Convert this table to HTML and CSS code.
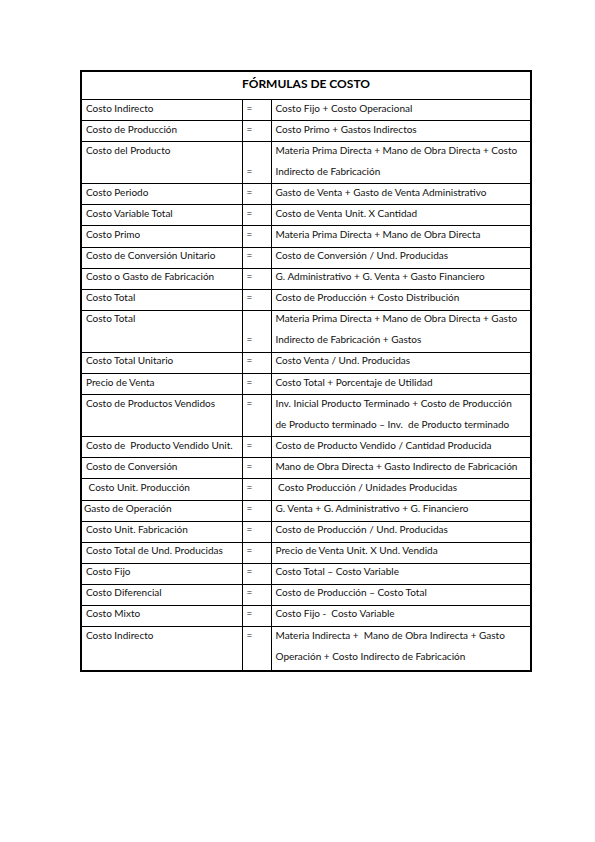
FILE: index.html
```html
<!DOCTYPE html>
<html lang="es">
<head>
<meta charset="utf-8">
<title>Fórmulas de Costo</title>
<link rel="stylesheet" href="styles.css">
</head>
<body>
<div class="page">
<table class="costs">
  <colgroup>
    <col class="c-name">
    <col class="c-eq">
    <col class="c-formula">
  </colgroup>
  <thead>
    <tr><th colspan="3" class="title">FÓRMULAS DE COSTO</th></tr>
  </thead>
  <tbody>
    <tr><td><div class="in">Costo Indirecto</div></td><td><div class="in">=</div></td><td><div class="in">Costo Fijo + Costo Operacional</div></td></tr>
    <tr><td><div class="in">Costo de Producción</div></td><td><div class="in">=</div></td><td><div class="in">Costo Primo + Gastos Indirectos</div></td></tr>
    <tr><td><div class="in">Costo del Producto</div></td><td class="bottom"><div class="in">=</div></td><td><div class="in">Materia Prima Directa + Mano de Obra Directa + Costo<br>Indirecto de Fabricación</div></td></tr>
    <tr><td><div class="in">Costo Periodo</div></td><td><div class="in">=</div></td><td><div class="in">Gasto de Venta + Gasto de Venta Administrativo</div></td></tr>
    <tr><td><div class="in">Costo Variable Total</div></td><td><div class="in">=</div></td><td><div class="in">Costo de Venta Unit. X Cantidad</div></td></tr>
    <tr><td><div class="in">Costo Primo</div></td><td><div class="in">=</div></td><td><div class="in">Materia Prima Directa + Mano de Obra Directa</div></td></tr>
    <tr><td><div class="in">Costo de Conversión Unitario</div></td><td><div class="in">=</div></td><td><div class="in">Costo de Conversión / Und. Producidas</div></td></tr>
    <tr><td><div class="in">Costo o Gasto de Fabricación</div></td><td><div class="in">=</div></td><td><div class="in">G. Administrativo + G. Venta + Gasto Financiero</div></td></tr>
    <tr><td><div class="in">Costo Total</div></td><td><div class="in">=</div></td><td><div class="in">Costo de Producción + Costo Distribución</div></td></tr>
    <tr><td><div class="in">Costo Total</div></td><td class="bottom"><div class="in">=</div></td><td><div class="in">Materia Prima Directa + Mano de Obra Directa + Gasto<br>Indirecto de Fabricación + Gastos</div></td></tr>
    <tr><td><div class="in">Costo Total Unitario</div></td><td><div class="in">=</div></td><td><div class="in">Costo Venta / Und. Producidas</div></td></tr>
    <tr><td><div class="in">Precio de Venta</div></td><td><div class="in">=</div></td><td><div class="in">Costo Total + Porcentaje de Utilidad</div></td></tr>
    <tr><td><div class="in">Costo de Productos Vendidos</div></td><td><div class="in">=</div></td><td><div class="in">Inv. Inicial Producto Terminado + Costo de Producción<br>de Producto terminado – Inv.&nbsp; de Producto terminado</div></td></tr>
    <tr><td><div class="in">Costo de&nbsp; Producto Vendido Unit.</div></td><td><div class="in">=</div></td><td><div class="in">Costo de Producto Vendido / Cantidad Producida</div></td></tr>
    <tr><td><div class="in">Costo de Conversión</div></td><td><div class="in">=</div></td><td><div class="in">Mano de Obra Directa + Gasto Indirecto de Fabricación</div></td></tr>
    <tr><td><div class="in">&nbsp;Costo Unit. Producción</div></td><td><div class="in">=</div></td><td><div class="in">&nbsp;Costo Producción / Unidades Producidas</div></td></tr>
    <tr><td class="tight"><div class="in">Gasto de Operación</div></td><td><div class="in">=</div></td><td><div class="in">G. Venta + G. Administrativo + G. Financiero</div></td></tr>
    <tr><td><div class="in">Costo Unit. Fabricación</div></td><td><div class="in">=</div></td><td><div class="in">Costo de Producción / Und. Producidas</div></td></tr>
    <tr><td><div class="in">Costo Total de Und. Producidas</div></td><td><div class="in">=</div></td><td><div class="in">Precio de Venta Unit. X Und. Vendida</div></td></tr>
    <tr><td><div class="in">Costo Fijo</div></td><td><div class="in">=</div></td><td><div class="in">Costo Total – Costo Variable</div></td></tr>
    <tr><td><div class="in">Costo Diferencial</div></td><td><div class="in">=</div></td><td><div class="in">Costo de Producción – Costo Total</div></td></tr>
    <tr><td><div class="in">Costo Mixto</div></td><td><div class="in">=</div></td><td><div class="in">Costo Fijo -&nbsp; Costo Variable</div></td></tr>
    <tr class="last"><td><div class="in">Costo Indirecto</div></td><td><div class="in">=</div></td><td><div class="in">Materia Indirecta +&nbsp; Mano de Obra Indirecta + Gasto<br>Operación + Costo Indirecto de Fabricación</div></td></tr>
  </tbody>
</table>
</div>
</body>
</html>
```

FILE: styles.css
```css
html, body {
  margin: 0;
  padding: 0;
  background: #ffffff;
}

.page {
  width: 595px;
  height: 842px;
  padding-top: 70px;
  padding-left: 80px;
  box-sizing: border-box;
}

.costs {
  border-collapse: collapse;
  width: 450px;
  table-layout: fixed;
  border: 2px solid #000;
  font-family: "Lato", "Liberation Sans", sans-serif;
  font-size: 10px;
  color: #111;
}

.c-name { width: 161px; }
.c-eq { width: 29px; }
.c-formula { width: 260px; }

.costs th.title {
  font-weight: bold;
  font-size: 12px;
  height: 22px;
  padding: 0 0 5px 0;
  text-align: center;
  vertical-align: middle;
  border-bottom: 1.5px solid #000;
  color: #000;
}

.costs td {
  border: 1px solid #000;
  padding: 0 3px 0 4px;
  vertical-align: top;
  white-space: nowrap;
  overflow: hidden;
}

.costs td .in {
  line-height: 21px;
  margin-top: -2.5px;
  margin-bottom: 1.6px;
}

.costs tr.last td .in {
  margin-bottom: 3.6px;
}

.costs td.bottom {
  vertical-align: bottom;
}

.costs td.tight {
  padding-left: 2px;
}
```
